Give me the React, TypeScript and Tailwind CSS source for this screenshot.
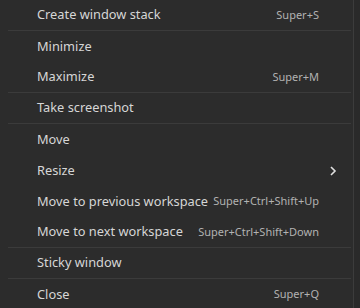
import React from "react";

type Item = { label: string; shortcut?: string; sep?: boolean; sub?: boolean };

const items: Item[] = [
  { label: "Create window stack", shortcut: "Super+S", sep: true },
  { label: "Minimize" },
  { label: "Maximize", shortcut: "Super+M", sep: true },
  { label: "Take screenshot", sep: true },
  { label: "Move" },
  { label: "Resize", sub: true },
  { label: "Move to previous workspace", shortcut: "Super+Ctrl+Shift+Up" },
  { label: "Move to next workspace", shortcut: "Super+Ctrl+Shift+Down", sep: true },
  { label: "Sticky window", sep: true },
  { label: "Close", shortcut: "Super+Q" },
];

export default function App() {
  return (
    <div
      className="w-[360px] h-[308px] overflow-hidden bg-[#2a2a2a] flex"
      style={{ fontFamily: '"Noto Sans", "Open Sans", sans-serif' }}
    >
      <div className="w-[354px] border-r border-[#3c3c3c] bg-[#2c2c2c] flex flex-col pl-2 pr-[2px]">
        {items.map((it, i) => (
          <div
            key={i}
            className={`h-[31px] shrink-0 flex items-center pl-[29px] pr-[32px] ${
              it.sep ? "border-b border-[#3b3b3b]" : ""
            }`}
          >
            <span className="text-[12.8px] text-[#d6d6d6] whitespace-nowrap">{it.label}</span>
            <span className="flex-1" />
            {it.shortcut && (
              <span className="text-[11px] text-[#b2b2b2] whitespace-nowrap">{it.shortcut}</span>
            )}
            {it.sub && (
              <svg width="8" height="12" viewBox="0 0 8 12" className="mr-[-18px]">
                <path d="M2 2 L6 6 L2 10" stroke="#e0e0e0" strokeWidth="1.6" fill="none" />
              </svg>
            )}
          </div>
        ))}
      </div>
    </div>
  );
}
